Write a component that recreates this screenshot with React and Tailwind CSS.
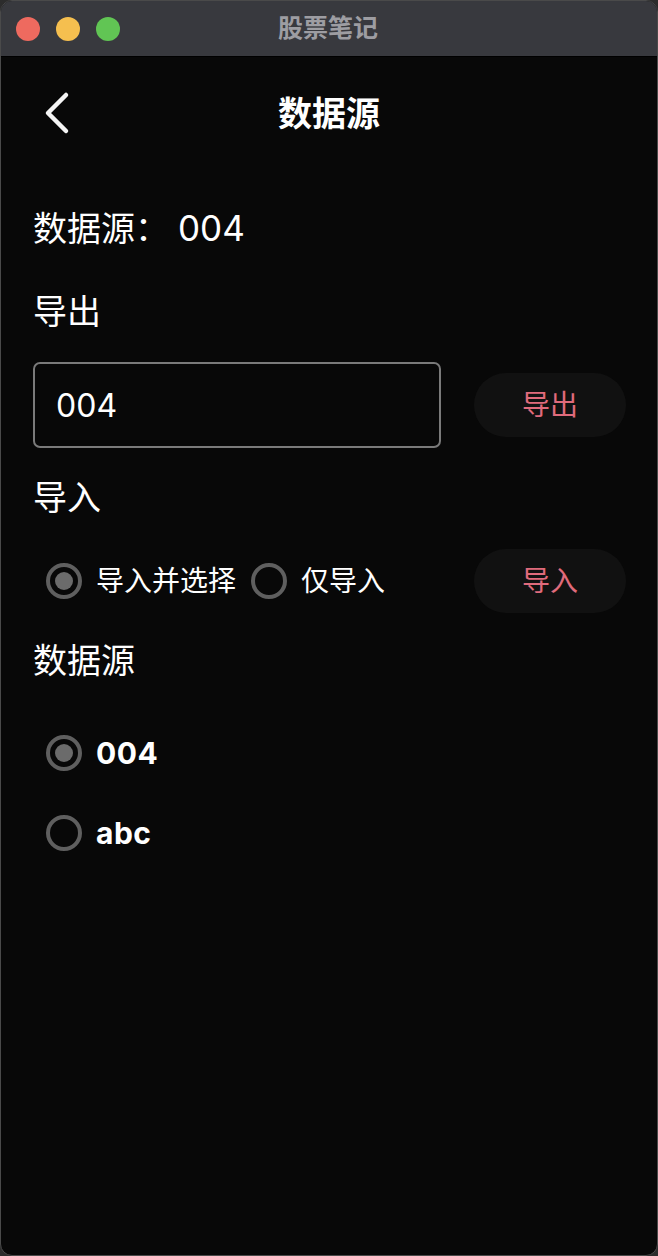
import React, { useState } from "react";

const font = { fontFamily: '"Inter", "Noto Sans CJK SC", sans-serif' };

function Radio({ checked }) {
  return (
    <span className="flex h-[36px] w-[36px] shrink-0 items-center justify-center rounded-full border-[4px] border-[#5f5f5f]">
      {checked && <span className="h-[18px] w-[18px] rounded-full bg-[#6b6b6b]" />}
    </span>
  );
}

export default function App() {
  const [mode, setMode] = useState("select");
  const [source, setSource] = useState("004");
  const [name, setName] = useState("004");

  return (
    <div className="h-[1256px] w-[658px] bg-[#2c2c2c]" style={font}>
      <div className="flex h-full flex-col overflow-hidden rounded-[12px] border border-[#4a4a4a] bg-[#080808]">
        {/* title bar */}
        <div className="relative flex h-[56px] shrink-0 items-center border-b border-black bg-[#38393e]">
          <div className="flex gap-[16px] pl-[15px]">
            <span className="h-[24px] w-[24px] rounded-full bg-[#ee6a5f]" />
            <span className="h-[24px] w-[24px] rounded-full bg-[#f5bf4f]" />
            <span className="h-[24px] w-[24px] rounded-full bg-[#61c554]" />
          </div>
          <div className="absolute inset-0 flex items-center justify-center pr-[2px] text-[25px] font-bold text-[#9d9da2]">
            股票笔记
          </div>
        </div>

        {/* header */}
        <div className="relative flex h-[112px] shrink-0 items-center justify-center">
          <button className="absolute left-[42px] top-[34px]">
            <svg width="28" height="44" viewBox="0 0 28 44" fill="none">
              <path d="M23 4 L5 22 L23 40" stroke="#f5f5f5" strokeWidth="4.5" strokeLinecap="round" strokeLinejoin="round" />
            </svg>
          </button>
          <h1 className="text-[34px] font-bold text-white">数据源</h1>
        </div>

        <div className="flex flex-col pl-[32px] pr-[31px] text-white">
          <div className="mt-[39px] text-[34px] leading-[40px]">
            数据源：<span className="ml-[9px] text-[35px]">{source}</span>
          </div>

          <div className="mt-[43px] text-[34px] leading-[40px]">导出</div>
          <div className="mt-[30px] flex h-[86px] items-center">
            <input
              value={name}
              onChange={(e) => setName(e.target.value)}
              className="h-[86px] w-[408px] rounded-[7px] border-2 border-[#7a7a7a] bg-transparent px-[21px] text-[32px] text-white outline-none"
            />
            <button className="ml-auto h-[64px] w-[152px] rounded-full bg-[#111111] text-[28px] text-[#e06b7c]">
              导出
            </button>
          </div>

          <div className="mt-[30px] text-[34px] leading-[40px]">导入</div>
          <div className="mt-[31px] flex h-[64px] items-center">
            <label className="ml-[13px] flex items-center gap-[14px]" onClick={() => setMode("select")}>
              <Radio checked={mode === "select"} />
              <span className="text-[28px]">导入并选择</span>
            </label>
            <label className="ml-[15px] flex items-center gap-[14px]" onClick={() => setMode("only")}>
              <Radio checked={mode === "only"} />
              <span className="text-[28px]">仅导入</span>
            </label>
            <button className="ml-auto h-[64px] w-[152px] rounded-full bg-[#111111] text-[28px] text-[#e06b7c]">
              导入
            </button>
          </div>

          <div className="mt-[28px] text-[34px] leading-[40px]">数据源</div>
          <div className="mt-[32px] flex flex-col">
            {["004", "abc"].map((s) => (
              <label key={s} className="ml-[13px] flex h-[80px] items-center gap-[14px]" onClick={() => setSource(s)}>
                <Radio checked={source === s} />
                <span className="text-[30px] font-bold tracking-[0.5px]">{s}</span>
              </label>
            ))}
          </div>
        </div>
      </div>
    </div>
  );
}
